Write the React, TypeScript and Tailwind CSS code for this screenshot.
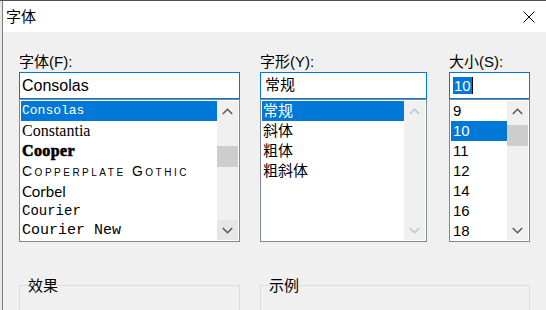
import React from "react";

const UI = "font-['Liberation_Sans','Noto_Sans_CJK_SC',sans-serif]";

function Chevron({ up, disabled }: { up?: boolean; disabled?: boolean }) {
  return (
    <svg width="11" height="7" viewBox="0 0 11 7" fill="none">
      <polyline
        points={up ? "0.8,6 5.5,1.3 10.2,6" : "0.8,1 5.5,5.7 10.2,1"}
        stroke={disabled ? "#c4c4c4" : "#5a5a5a"}
        strokeWidth="1.6"
      />
    </svg>
  );
}

function ScrollBar({
  thumbTop,
  disabled,
  downBg,
}: {
  thumbTop?: number;
  disabled?: boolean;
  downBg?: boolean;
}) {
  return (
    <div className="w-[21px] h-full flex flex-col bg-[#f0f0f0]">
      <div className="h-[20px] flex items-center justify-center">
        <Chevron up disabled={disabled} />
      </div>
      <div className="flex-1 flex flex-col">
        {thumbTop !== undefined && (
          <div className="w-full h-[21px] bg-[#cdcdcd]" style={{ marginTop: thumbTop }} />
        )}
      </div>
      <div
        className={
          "h-[20px] flex items-center justify-center " + (downBg ? "bg-[#e6e6e6]" : "")
        }
      >
        <Chevron disabled={disabled} />
      </div>
    </div>
  );
}

type Item = { text: string; cls: string };

function ListBox({
  items,
  selected,
  thumbTop,
  disabled,
  downBg,
  rowPad,
}: {
  items: Item[];
  selected: number;
  thumbTop?: number;
  disabled?: boolean;
  downBg?: boolean;
  rowPad: string;
}) {
  return (
    <div className="h-[143px] border border-[#828790] bg-white p-px flex">
      <div className="flex-1 flex flex-col overflow-hidden">
        {items.map((it, i) => (
          <div
            key={i}
            className={
              "h-[20px] shrink-0 leading-[20px] whitespace-nowrap overflow-hidden " +
              rowPad +
              " " +
              (i === selected ? "bg-[#0078d7] text-white " : "text-black ") +
              it.cls
            }
          >
            {it.text}
          </div>
        ))}
      </div>
      <ScrollBar thumbTop={thumbTop} disabled={disabled} downBg={downBg} />
    </div>
  );
}

export default function App() {
  const fontItems: Item[] = [
    { text: "Consolas", cls: "font-['Liberation_Mono',monospace] text-[13px]" },
    { text: "Constantia", cls: "font-['Liberation_Serif',serif] text-[16px]" },
    {
      text: "Cooper",
      cls: "font-['Liberation_Serif',serif] font-bold text-[16px] tracking-[0.4px] [-webkit-text-stroke:0.6px_black]",
    },
    {
      text: "Copperplate Gothic",
      cls: "font-['Liberation_Sans',sans-serif] text-[14px] [font-variant-caps:small-caps] tracking-[2.5px]",
    },
    { text: "Corbel", cls: "font-['Lato',sans-serif] text-[15px]" },
    { text: "Courier", cls: "font-['Liberation_Mono',monospace] text-[14px]" },
    { text: "Courier New", cls: "font-['Liberation_Mono',monospace] text-[15px]" },
  ];
  const styleItems: Item[] = [
    { text: "常规", cls: UI + " text-[15px]" },
    { text: "斜体", cls: UI + " text-[15px]" },
    { text: "粗体", cls: UI + " text-[15px]" },
    { text: "粗斜体", cls: UI + " text-[15px]" },
  ];
  const sizeItems: Item[] = ["9", "10", "11", "12", "14", "16", "18"].map((t) => ({
    text: t,
    cls: UI + " text-[15px]",
  }));

  return (
    <div className={"w-[546px] h-[310px] overflow-hidden bg-[#f0f0f0] flex flex-col " + UI}>
      <div className="h-[1px] bg-[#505050] shrink-0" />
      <div className="flex flex-1">
        <div className="w-[2px] bg-[#e8e8e8] shrink-0" />
        <div className="w-px bg-[#7a7a7a] shrink-0" />
        <div className="flex-1 flex flex-col">
          {/* title bar */}
          <div className="h-[31px] bg-white flex items-center justify-between pl-[3px] pr-[11px] shrink-0">
            <span className="text-[15px] text-black leading-[20px]">字体</span>
            <svg width="12" height="12" viewBox="0 0 12 12">
              <path d="M0.5 0.5 L11.5 11.5 M11.5 0.5 L0.5 11.5" stroke="#000" strokeWidth="1" />
            </svg>
          </div>
          {/* body */}
          <div className="flex-1 pl-[16px] pt-[20px] flex flex-col">
            <div className="flex">
              {/* col 1 */}
              <div className="w-[221px] flex flex-col">
                <div className="h-[20px] leading-[20px] text-[15px] text-black">字体(F):</div>
                <div className="h-[27px] border border-[#0078d7] bg-white flex items-center pl-[2px] text-[16px] text-black">
                  Consolas
                </div>
                <ListBox items={fontItems} selected={0} thumbTop={25} downBg rowPad="pl-[1px]" />
              </div>
              {/* col 2 */}
              <div className="w-[167px] ml-[20px] flex flex-col">
                <div className="h-[20px] leading-[20px] text-[15px] text-black">字形(Y):</div>
                <div className="h-[27px] border border-[#0078d7] bg-white flex items-center pl-[4px] text-[15px] text-black">
                  常规
                </div>
                <ListBox items={styleItems} selected={0} disabled rowPad="pl-[1px]" />
              </div>
              {/* col 3 */}
              <div className="w-[81px] ml-[22px] flex flex-col">
                <div className="h-[20px] leading-[20px] text-[15px] text-black">大小(S):</div>
                <div className="h-[27px] border border-[#0078d7] bg-white flex items-center pl-[3px]">
                  <span className="bg-[#0078d7] text-white text-[15px] leading-[17px] px-px">10</span>
                  <span className="w-px h-[17px] bg-black" />
                </div>
                <ListBox items={sizeItems} selected={1} thumbTop={4} rowPad="pl-[2px]" />
              </div>
            </div>
            {/* group boxes */}
            <div className="flex mt-[43px]">
              <div className="relative w-[221px] h-[60px] border border-[#dcdcdc]">
                <span className="absolute -top-[10px] left-[8px] bg-[#f0f0f0] text-[15px] leading-[20px] text-black">
                  效果
                </span>
              </div>
              <div className="relative w-[270px] ml-[20px] h-[60px] border border-[#dcdcdc]">
                <span className="absolute -top-[10px] left-[8px] bg-[#f0f0f0] text-[15px] leading-[20px] text-black">
                  示例
                </span>
              </div>
            </div>
          </div>
        </div>
      </div>
    </div>
  );
}
